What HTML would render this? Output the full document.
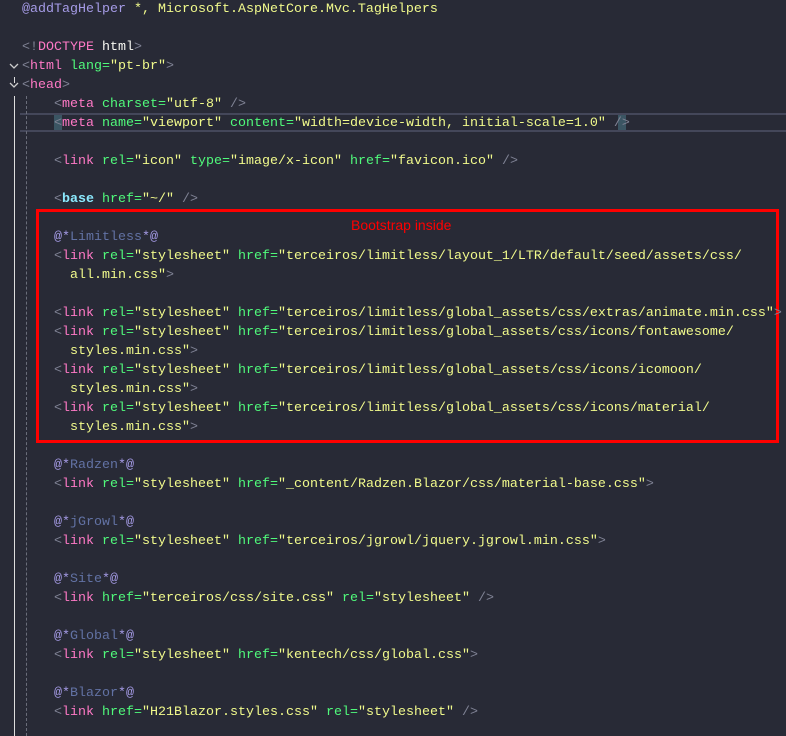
<!DOCTYPE html>
<html><head><style>
body{margin:0;width:786px;height:732px;background:#282a36;overflow:hidden;position:relative}
pre{margin:0;position:absolute;left:22px;top:0px;font:13.33px/19px "Liberation Mono",monospace;color:#f8f8f2;white-space:pre}
.b{color:#7f8294}.t{color:#ff79c6}.a{color:#50fa7b}.s{color:#f1fa8c}.c{color:#6272a4}.ca{color:#a59be6}.w{color:#f8f8f2}.bt{color:#8be9fd;font-weight:bold}
.g{position:absolute}
</style></head><body>
<div class="g" style="left:20px;top:113px;width:766px;height:19px;border-top:2px solid #44475a;border-bottom:2px solid #44475a;box-sizing:border-box"></div>
<div class="g" style="left:54px;top:115px;width:8px;height:15px;background:#3b5563"></div>
<div class="g" style="left:618px;top:115px;width:8px;height:15px;background:#3b5563"></div>
<div class="g" style="left:14px;top:77px;width:1px;height:6px;background:#ddd"></div>
<div class="g" style="left:14px;top:96px;width:1px;height:640px;background:#ddd"></div>
<div class="g" style="left:26px;top:96px;width:0;height:640px;border-left:1px dashed #6a6d7a"></div>
<svg class="g" style="left:8px;top:62px" width="12" height="8"><path d="M2 2L6 6L10 2" stroke="#ccc" stroke-width="1.3" fill="none"/></svg>
<svg class="g" style="left:8px;top:81px" width="12" height="8"><path d="M2 2L6 6L10 2" stroke="#ccc" stroke-width="1.3" fill="none"/></svg>
<div class="g" style="left:36px;top:209px;width:743px;height:234px;border:3px solid #ff0000;box-sizing:border-box"></div>
<div class="g" style="left:351px;top:217px;color:#ff0000;font:14px 'Liberation Sans',sans-serif">Bootstrap inside</div>
<pre><span class="ca">@addTagHelper</span> <span class="s">*, Microsoft.AspNetCore.Mvc.TagHelpers</span>

<span class="b">&lt;!</span><span class="t">DOCTYPE</span> <span class="w">html</span><span class="b">&gt;</span>
<span class="b">&lt;</span><span class="t">html</span> <span class="a">lang=</span><span class="s">"pt-br"</span><span class="b">&gt;</span>
<span class="b">&lt;</span><span class="t">head</span><span class="b">&gt;</span>
    <span class="b">&lt;</span><span class="t">meta</span> <span class="a">charset=</span><span class="s">"utf-8"</span> <span class="b">/&gt;</span>
    <span class="b">&lt;</span><span class="t">meta</span> <span class="a">name=</span><span class="s">"viewport"</span> <span class="a">content=</span><span class="s">"width=device-width, initial-scale=1.0"</span> <span class="b">/&gt;</span>

    <span class="b">&lt;</span><span class="t">link</span> <span class="a">rel=</span><span class="s">"icon"</span> <span class="a">type=</span><span class="s">"image/x-icon"</span> <span class="a">href=</span><span class="s">"favicon.ico"</span> <span class="b">/&gt;</span>

    <span class="b">&lt;</span><span class="bt">base</span> <span class="a">href=</span><span class="s">"~/"</span> <span class="b">/&gt;</span>

    <span class="ca">@*</span><span class="c">Limitless</span><span class="ca">*@</span>
    <span class="b">&lt;</span><span class="t">link</span> <span class="a">rel=</span><span class="s">"stylesheet"</span> <span class="a">href=</span><span class="s">"terceiros/limitless/layout_1/LTR/default/seed/assets/css/</span>
<span class="s">      all.min.css"</span><span class="b">&gt;</span>

    <span class="b">&lt;</span><span class="t">link</span> <span class="a">rel=</span><span class="s">"stylesheet"</span> <span class="a">href=</span><span class="s">"terceiros/limitless/global_assets/css/extras/animate.min.css"</span><span class="b">&gt;</span>
    <span class="b">&lt;</span><span class="t">link</span> <span class="a">rel=</span><span class="s">"stylesheet"</span> <span class="a">href=</span><span class="s">"terceiros/limitless/global_assets/css/icons/fontawesome/</span>
<span class="s">      styles.min.css"</span><span class="b">&gt;</span>
    <span class="b">&lt;</span><span class="t">link</span> <span class="a">rel=</span><span class="s">"stylesheet"</span> <span class="a">href=</span><span class="s">"terceiros/limitless/global_assets/css/icons/icomoon/</span>
<span class="s">      styles.min.css"</span><span class="b">&gt;</span>
    <span class="b">&lt;</span><span class="t">link</span> <span class="a">rel=</span><span class="s">"stylesheet"</span> <span class="a">href=</span><span class="s">"terceiros/limitless/global_assets/css/icons/material/</span>
<span class="s">      styles.min.css"</span><span class="b">&gt;</span>

    <span class="ca">@*</span><span class="c">Radzen</span><span class="ca">*@</span>
    <span class="b">&lt;</span><span class="t">link</span> <span class="a">rel=</span><span class="s">"stylesheet"</span> <span class="a">href=</span><span class="s">"_content/Radzen.Blazor/css/material-base.css"</span><span class="b">&gt;</span>

    <span class="ca">@*</span><span class="c">jGrowl</span><span class="ca">*@</span>
    <span class="b">&lt;</span><span class="t">link</span> <span class="a">rel=</span><span class="s">"stylesheet"</span> <span class="a">href=</span><span class="s">"terceiros/jgrowl/jquery.jgrowl.min.css"</span><span class="b">&gt;</span>

    <span class="ca">@*</span><span class="c">Site</span><span class="ca">*@</span>
    <span class="b">&lt;</span><span class="t">link</span> <span class="a">href=</span><span class="s">"terceiros/css/site.css"</span> <span class="a">rel=</span><span class="s">"stylesheet"</span> <span class="b">/&gt;</span>

    <span class="ca">@*</span><span class="c">Global</span><span class="ca">*@</span>
    <span class="b">&lt;</span><span class="t">link</span> <span class="a">rel=</span><span class="s">"stylesheet"</span> <span class="a">href=</span><span class="s">"kentech/css/global.css"</span><span class="b">&gt;</span>

    <span class="ca">@*</span><span class="c">Blazor</span><span class="ca">*@</span>
    <span class="b">&lt;</span><span class="t">link</span> <span class="a">href=</span><span class="s">"H21Blazor.styles.css"</span> <span class="a">rel=</span><span class="s">"stylesheet"</span> <span class="b">/&gt;</span>
</pre>
</body></html>
